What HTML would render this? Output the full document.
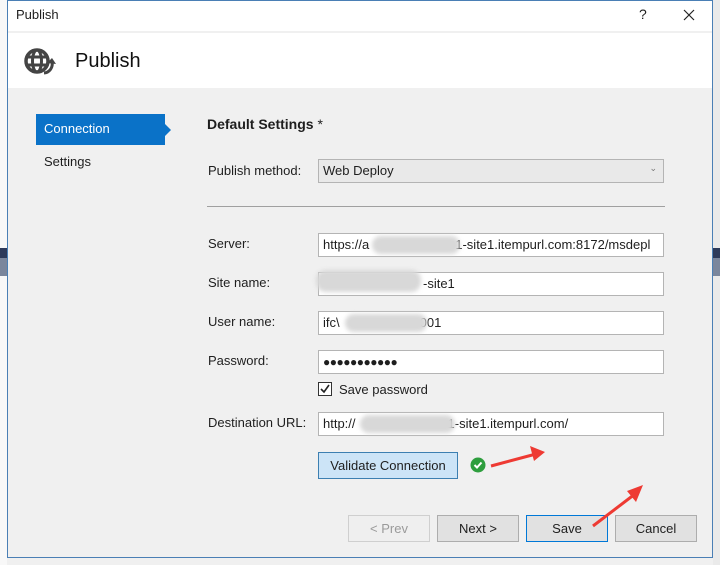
<!DOCTYPE html>
<html><head><meta charset="utf-8"><style>
*{margin:0;padding:0;box-sizing:border-box}
body{width:720px;height:565px;background:#f0f0f0;font-family:"Segoe UI","Liberation Sans","DejaVu Sans",sans-serif;font-size:13px;color:#1e1e1e;position:relative;overflow:hidden}
.abs{position:absolute}
.win{left:7px;top:0;width:706px;height:558px;border:1px solid #4a7fb5;background:#f0f0f0}
.inp{position:absolute;left:318px;width:346px;height:24px;border:1px solid #b4b4b4;background:#fff;padding:3px 4px;font-size:13px;white-space:nowrap;overflow:hidden}
.lbl{position:absolute;left:208px;font-size:13px}
.blur{position:absolute;background:#d8d8d8;border-radius:10px;filter:blur(2px)}
.btn{position:absolute;top:515px;width:82px;height:27px;border:1px solid #adadad;background:#e1e1e1;text-align:center;line-height:25px;font-size:13px}
</style></head><body>
<div class="abs" style="left:0;top:0;width:7px;height:565px;background:#f8f8f8"></div>
<div class="abs" style="left:0;top:248px;width:7px;height:10px;background:#2d3a5a"></div>
<div class="abs" style="left:0;top:258px;width:7px;height:18px;background:#7a869c"></div>
<div class="abs" style="left:713px;top:0;width:7px;height:565px;background:#eaeaea"></div>
<div class="abs" style="left:713px;top:248px;width:7px;height:10px;background:#2d3a5a"></div>
<div class="abs" style="left:713px;top:258px;width:7px;height:18px;background:#7a869c"></div>
<div class="abs win"></div>
<div class="abs" style="left:8px;top:1px;width:704px;height:30px;background:#fff"></div>
<div class="abs" style="left:16px;top:7px;font-size:13px">Publish</div>
<div class="abs" style="left:639px;top:6px;font-size:14px">?</div>
<svg class="abs" style="left:683px;top:9px" width="12" height="12"><path d="M1 1L11 11M11 1L1 11" stroke="#222" stroke-width="1.2"/></svg>
<div class="abs" style="left:8px;top:31px;width:704px;height:2px;background:#f0f0f0"></div>
<div class="abs" style="left:8px;top:33px;width:704px;height:55px;background:#fff"></div>
<svg class="abs" style="left:22px;top:46px" width="36" height="32" viewBox="0 0 36 32">
<circle cx="15" cy="15" r="11" fill="none" stroke="#444" stroke-width="3.5"/>
<ellipse cx="15" cy="15" rx="4.5" ry="11" fill="none" stroke="#444" stroke-width="3"/>
<path d="M4 11H26M4 19H24" stroke="#444" stroke-width="3"/>
<path d="M22 27a9 9 0 0 0 8-11" fill="none" stroke="#444" stroke-width="3"/>
<path d="M25 17l5-5 4 6z" fill="#444"/>
</svg>
<div class="abs" style="left:75px;top:50px;font-size:20px;color:#111">Publish</div>
<div class="abs" style="left:36px;top:114px;width:129px;height:31px;background:#0a72c8"></div>
<div class="abs" style="left:165px;top:124px;width:0;height:0;border-top:6px solid transparent;border-bottom:6px solid transparent;border-left:6px solid #0a72c8"></div>
<div class="abs" style="left:44px;top:121px;color:#fff">Connection</div>
<div class="abs" style="left:44px;top:154px">Settings</div>
<div class="abs" style="left:207px;top:116px;font-weight:bold;font-size:14px">Default Settings <span style="font-weight:normal">*</span></div>
<div class="lbl" style="top:163px">Publish method:</div>
<div class="inp" style="top:159px;background:#e9e9e9;height:24px;width:346px">Web Deploy<span style="position:absolute;right:6px;top:3px;font-size:9px;color:#777">&#8964;</span></div>
<div class="abs" style="left:207px;top:206px;width:458px;height:1px;background:#a0a0a0"></div>
<div class="lbl" style="top:236px">Server:</div>
<div class="inp" style="top:233px">https://a<span style="display:inline-block;width:86px"></span>1-site1.itempurl.com:8172/msdepl</div>
<div class="blur" style="left:372px;top:236px;width:88px;height:18px"></div>
<div class="lbl" style="top:275px">Site name:</div>
<div class="inp" style="top:272px"><span style="display:inline-block;width:100px"></span>-site1</div>
<div class="blur" style="left:316px;top:270px;width:105px;height:22px"></div>
<div class="lbl" style="top:314px">User name:</div>
<div class="inp" style="top:311px">ifc\<span style="display:inline-block;width:80px"></span>001</div>
<div class="blur" style="left:345px;top:314px;width:82px;height:18px"></div>
<div class="lbl" style="top:353px">Password:</div>
<div class="inp" style="top:350px;font-size:12px;letter-spacing:-0.5px;line-height:16px;font-weight:bold">●●●●●●●●●●●</div>
<div class="abs" style="left:318px;top:382px;width:14px;height:14px;border:1px solid #333;background:#fff"></div>
<svg class="abs" style="left:319px;top:383px" width="12" height="12"><path d="M2 6l3 3 5-7" fill="none" stroke="#222" stroke-width="1.6"/></svg>
<div class="abs" style="left:339px;top:382px">Save password</div>
<div class="lbl" style="top:415px">Destination URL:</div>
<div class="inp" style="top:412px">http://<span style="display:inline-block;width:92px"></span>1-site1.itempurl.com/</div>
<div class="blur" style="left:360px;top:415px;width:95px;height:18px"></div>
<div class="abs" style="left:318px;top:452px;width:140px;height:27px;border:1px solid #3c7fb1;background:#cce4f7;text-align:center;line-height:25px">Validate Connection</div>
<svg class="abs" style="left:470px;top:457px" width="16" height="16"><circle cx="8" cy="8" r="7.5" fill="#2e9e3e"/><path d="M4.5 8l2.5 2.5 4.5-5" fill="none" stroke="#fff" stroke-width="2"/></svg>
<svg class="abs" style="left:488px;top:440px" width="220" height="90">
<path d="M3 26L48 14" stroke="#ee3a33" stroke-width="3"/><path d="M57 12l-15-6 4 15z" fill="#ee3a33"/>
</svg>
<div class="btn" style="left:348px;color:#9a9a9a;background:#efefef;border-color:#cfcfcf">&lt; Prev</div>
<div class="btn" style="left:437px">Next &gt;</div>
<div class="btn" style="left:526px;border-color:#0078d7">Save</div>
<div class="btn" style="left:615px">Cancel</div>
<svg class="abs" style="left:590px;top:480px" width="60" height="50"><path d="M3 46L45 14" stroke="#ee3a33" stroke-width="3"/><path d="M53 5l-16 6 9 11z" fill="#ee3a33"/></svg>
</body></html>
